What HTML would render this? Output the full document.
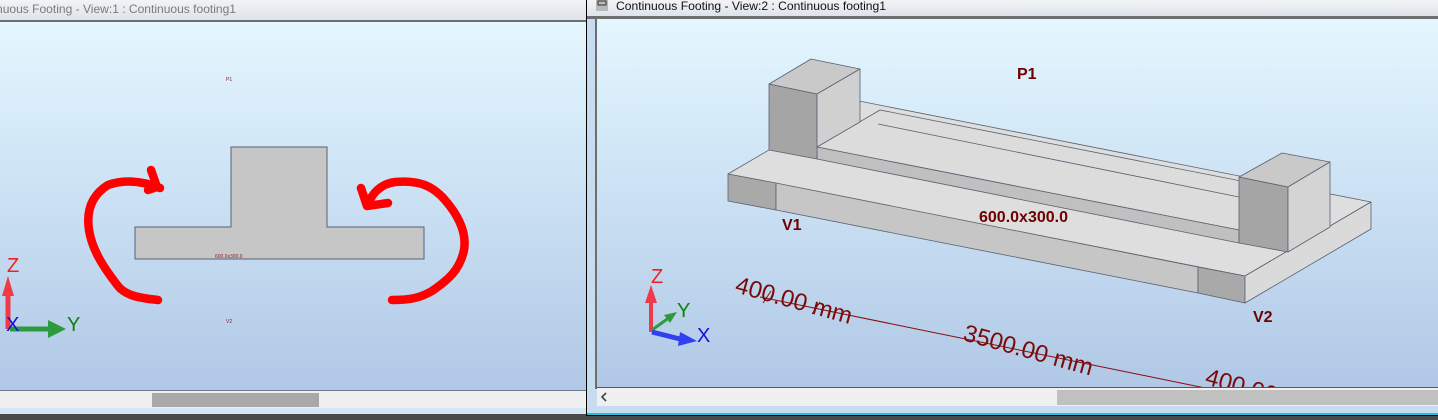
<!DOCTYPE html>
<html><head><style>
html,body{margin:0;padding:0;width:1438px;height:420px;overflow:hidden;background:#4a4a4a;font-family:"Liberation Sans",sans-serif}
</style></head><body>
<svg width="1438" height="420" xmlns="http://www.w3.org/2000/svg" style="position:absolute;left:0;top:0">
<defs>
<linearGradient id="bg" x1="0" y1="0" x2="0" y2="1">
<stop offset="0" stop-color="#e4f7ff"/><stop offset="1" stop-color="#b0c8e6"/></linearGradient>
<linearGradient id="tb" x1="0" y1="0" x2="0" y2="1">
<stop offset="0" stop-color="#f2f4f6"/><stop offset="1" stop-color="#dde3ea"/></linearGradient>
<clipPath id="vp"><rect x="597" y="19" width="841" height="368"/></clipPath>
</defs>
<rect x="0" y="414" width="1438" height="6" fill="#4a4a4a"/>
<!-- LEFT PANE -->
<rect x="0" y="0" width="586" height="414" fill="#d6e6f4"/>
<rect x="0" y="0" width="586" height="20" fill="url(#tb)"/>
<text x="-4" y="13" font-size="12" fill="#7a7a7a" textLength="240" lengthAdjust="spacingAndGlyphs">nuous Footing - View:1 : Continuous footing1</text>
<rect x="0" y="20" width="586" height="2" fill="#6e6e6e"/>
<rect x="0" y="22" width="586" height="369" fill="url(#bg)"/>
<rect x="0" y="390" width="586" height="1" fill="#6e7a88"/>
<rect x="0" y="391" width="586" height="17" fill="#f0f0f0"/>
<rect x="152" y="393" width="167" height="14" fill="#a8a8a8"/>
<rect x="0" y="408" width="586" height="5" fill="#d6e6f4"/>
<path d="M231 147H327V227H424V259H135V227H231Z" fill="#c6c6c6" stroke="#5a6070" stroke-width="1"/>
<text x="226" y="81" font-size="5" fill="#8a2020">P1</text>
<text x="226" y="323" font-size="5" fill="#8a2020">V2</text>
<text x="215" y="258" font-size="5" fill="#8a2020">600.0x300.0</text>
<g fill="none" stroke="#ff0000" stroke-width="8.5" stroke-linecap="round" stroke-linejoin="round">
<path d="M158 300C140 298 126 296 118 286C104 268 92 250 89 230C86 210 92 195 108 185C122 180 140 180 160 188"/>
<path d="M151 170L157 187L148 190"/>
<path d="M392 300C410 300 420 298 432 291C448 280 460 270 464 250C467 232 458 215 445 200C432 185 418 180 395 182C380 184 372 194 368 204"/>
<path d="M361 188L367 206L388 203"/>
</g>
<!-- left axes -->
<path d="M8 329V290" stroke="#f03a4a" stroke-width="5"/><path d="M2 296L8 276L14 296Z" fill="#f03a4a"/>
<path d="M10 329H50" stroke="#2e9a3e" stroke-width="5"/><path d="M48 320L66 329L48 338Z" fill="#2e9a3e"/>
<text x="7" y="272" font-size="20" fill="#f02020">Z</text>
<text x="6" y="331" font-size="20" fill="#1010e0">X</text>
<text x="67" y="331" font-size="20" fill="#108010">Y</text>
<!-- RIGHT PANE -->
<rect x="586" y="0" width="852" height="416" fill="#000"/>
<rect x="587" y="0" width="851" height="413" fill="#c8dcef"/>
<rect x="587" y="413" width="851" height="2" fill="#20c0d8"/>
<rect x="587" y="0" width="851" height="16" fill="url(#tb)"/>
<rect x="596" y="0" width="12" height="11" fill="#b8b8b8"/><rect x="598" y="1" width="8" height="4" fill="none" stroke="#333" stroke-width="1"/>
<text x="616" y="10" font-size="12" fill="#111" textLength="270" lengthAdjust="spacingAndGlyphs">Continuous Footing - View:2 : Continuous footing1</text>
<rect x="587" y="16" width="851" height="3" fill="#6e6e6e"/>
<rect x="595" y="19" width="2" height="370" fill="#6e6e6e"/>
<rect x="597" y="19" width="841" height="369" fill="url(#bg)"/>
<rect x="597" y="387" width="841" height="1" fill="#4e5a68"/>
<!-- 3D footing -->
<g stroke="#5a6070" stroke-width="0.8" stroke-linejoin="round">
<polygon points="728,174 854,100 1371,202 1245,276" fill="#dedede"/>
<polygon points="728,174 776,183 776,210 728,201" fill="#a9a9a9"/>
<polygon points="776,183 1198,267 1198,293 776,210" fill="#c6c6c6"/>
<polygon points="1198,267 1245,276 1245,303 1198,293" fill="#a9a9a9"/>
<polygon points="1245,276 1371,202 1371,229 1245,303" fill="#dadada"/>
<polygon points="817,147 880,110 1302,193 1239,230" fill="#dcdcdc"/>
<line x1="878" y1="124" x2="1239" y2="197"/>
<polygon points="817,147 1239,230 1239,243 817,159" fill="#c0c0c0"/>
<polygon points="769,84 817,94 817,159 769,150" fill="#a5a5a5"/>
<polygon points="769,84 811,59 860,69 817,94" fill="#c9c9c9"/>
<polygon points="817,94 860,69 860,122 817,147" fill="#d0d0d0"/>
<polygon points="1239,177 1288,187 1288,252 1239,243" fill="#a5a5a5"/>
<polygon points="1239,177 1282,153 1330,162 1288,187" fill="#c9c9c9"/>
<polygon points="1288,187 1330,162 1330,227 1288,252" fill="#d4d4d4"/>
</g>
<g fill="#6e0000" font-weight="bold">
<text x="1017" y="79" font-size="16">P1</text>
<text x="782" y="230" font-size="16">V1</text>
<text x="979" y="222" font-size="16">600.0x300.0</text>
<text x="1253" y="322" font-size="16">V2</text>
</g>
<g clip-path="url(#vp)" fill="#7a0a0a">
<text x="734" y="292" font-size="24" transform="rotate(15.5 734 292)">400.00 mm</text>
<text x="962" y="340" font-size="24" transform="rotate(15.5 962 340)">3500.00 mm</text>
<text x="1204" y="384" font-size="24" transform="rotate(15.5 1204 384)">400.00 mm</text>
<line x1="760" y1="297" x2="1215" y2="390" stroke="#8a0a0a" stroke-width="1"/>
<line x1="763" y1="303" x2="771" y2="291" stroke="#8a0a0a"/>
<line x1="812" y1="314" x2="820" y2="302" stroke="#8a0a0a"/>
</g>
<rect x="597" y="388" width="841" height="18" fill="#f0f0f0"/>
<rect x="1057" y="390" width="381" height="15" fill="#c0c0c0"/>
<path d="M606 393L602 397L606 401" fill="none" stroke="#444" stroke-width="1.6"/>
<!-- right axes -->
<path d="M651 332V300" stroke="#f03a4a" stroke-width="4"/><path d="M645 303L651 285L657 303Z" fill="#f03a4a"/>
<path d="M652 330L670 317" stroke="#2e9a3e" stroke-width="3"/><path d="M664 315L677 312L670 323Z" fill="#2e9a3e"/>
<path d="M652 332L684 340" stroke="#3040f0" stroke-width="5"/><path d="M680 332L697 341L678 346Z" fill="#3040f0"/>
<text x="651" y="283" font-size="20" fill="#f02020">Z</text>
<text x="677" y="317" font-size="20" fill="#108010">Y</text>
<text x="697" y="342" font-size="20" fill="#1010e0">X</text>
</svg>
</body></html>
